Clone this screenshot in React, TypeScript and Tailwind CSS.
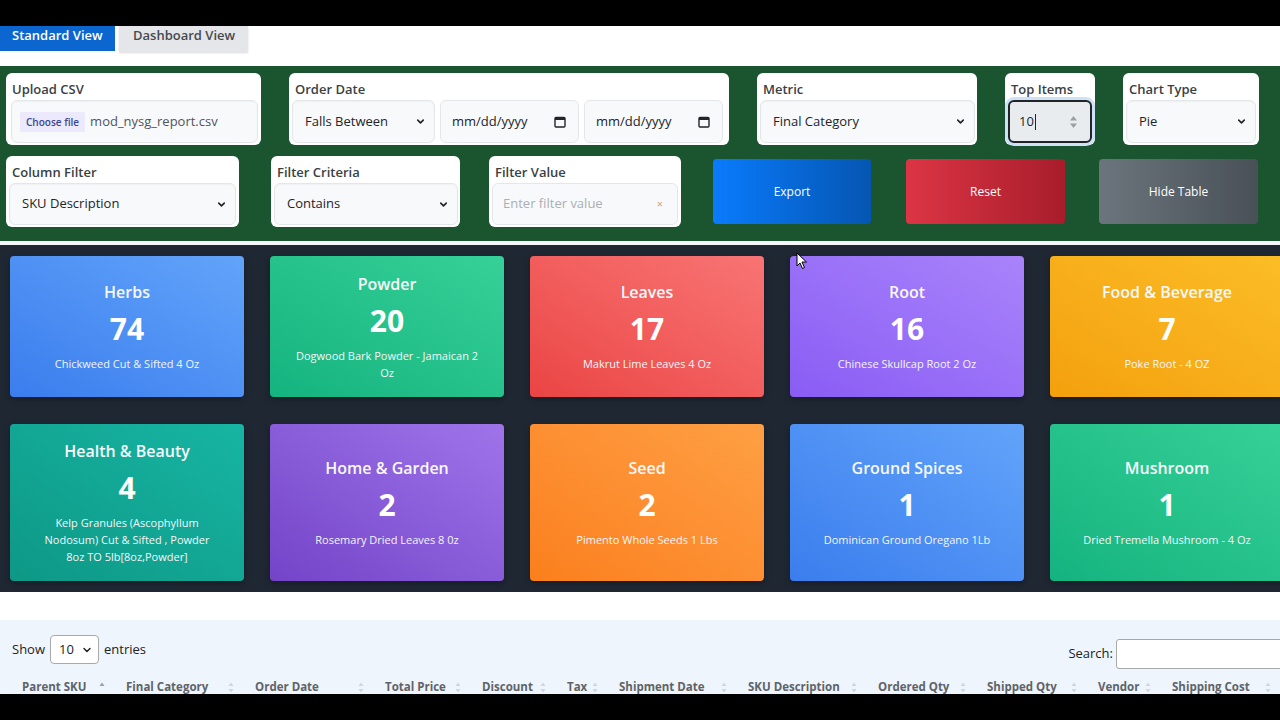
import { ChevronDown } from "lucide-react";

const cardsTop = [
    { title: "Herbs", value: "74", desc: "Chickweed Cut & Sifted 4 Oz", color: "from-[#3b7ded] to-[#62a4fa]" },
    { title: "Powder", value: "20", desc: "Dogwood Bark Powder - Jamaican 2 Oz", color: "from-[#13b37f] to-[#35d198]" },
    { title: "Leaves", value: "17", desc: "Makrut Lime Leaves 4 Oz", color: "from-[#ea4444] to-[#f87474]" },
    { title: "Root", value: "16", desc: "Chinese Skullcap Root 2 Oz", color: "from-[#8a5cf4] to-[#a983fb]" },
    { title: "Food & Beverage", value: "7", desc: "Poke Root - 4 OZ", color: "from-[#f4a00c] to-[#fbbd26]" },
];

const cardsBottom = [
    { title: "Health & Beauty", value: "4", desc: "Kelp Granules (Ascophyllum Nodosum) Cut & Sifted , Powder 8oz TO 5lb[8oz,Powder]", color: "from-[#0e9886] to-[#17b5a3]" },
    { title: "Home & Garden", value: "2", desc: "Rosemary Dried Leaves 8 0z", color: "from-[#7444c8] to-[#9f74ea]" },
    { title: "Seed", value: "2", desc: "Pimento Whole Seeds 1 Lbs", color: "from-[#fb7f1c] to-[#fe9f43]" },
    { title: "Ground Spices", value: "1", desc: "Dominican Ground Oregano 1Lb", color: "from-[#3b7ded] to-[#62a4fa]" },
    { title: "Mushroom", value: "1", desc: "Dried Tremella Mushroom - 4 Oz", color: "from-[#13b37f] to-[#35d198]" },
];

const columns = [
    { name: "Parent SKU", w: 104, active: true },
    { name: "Final Category", w: 129 },
    { name: "Order Date", w: 130 },
    { name: "Total Price", w: 97 },
    { name: "Discount", w: 85 },
    { name: "Tax", w: 52 },
    { name: "Shipment Date", w: 129 },
    { name: "SKU Description", w: 130 },
    { name: "Ordered Qty", w: 109 },
    { name: "Shipped Qty", w: 111 },
    { name: "Vendor", w: 74 },
    { name: "Shipping Cost", w: 120 },
];

export default function App() {
    return (
        <div className="relative w-[1280px] h-[720px] bg-black flex flex-col overflow-hidden" style={{ fontFamily: '"Open Sans", sans-serif' }}>
            <div className="h-[26px] shrink-0" />
            <div className="h-[668px] shrink-0 bg-white overflow-hidden flex flex-col">
                {/* view tabs */}
                <div className="flex items-start h-[26px] gap-[4px] shrink-0">
                    <div className="w-[115px] h-[25px] bg-[#0b66cf] text-white text-[13px] font-semibold pl-[12px] leading-[19px]">Standard View</div>
                    <div className="w-[129px] h-[26px] bg-[#e4e6e9] text-[#454a50] text-[13px] font-semibold pl-[14px] leading-[19px] shadow-[0_1px_2px_rgba(0,0,0,0.15)]">Dashboard View</div>
                </div>
                <div className="h-[14px] shrink-0" />

                {/* filter panel */}
                <div className="bg-[#1a5530] pt-[7px] pb-[14px] pl-[6px] flex flex-col gap-[11px] shrink-0">
                    <div className="flex gap-[28px]">
                        <FilterBox label="Upload CSV" className="w-[255px]">
                            <div className="h-[43px] ml-[2px] bg-[#f8f9fa] border border-[#e4e7ea] rounded-[6px] flex items-center pl-[8px] shadow-[inset_0_1px_2px_rgba(0,0,0,0.04)]">
                                <span className="bg-[#ebe9fb] text-[#3a4796] text-[10px] font-semibold px-[6px] h-[20px] leading-[20px] rounded-[2px]">Choose file</span>
                                <span className="ml-[5px] text-[13px] text-[#4f555b]">mod_nysg_report.csv</span>
                            </div>
                        </FilterBox>
                        <FilterBox label="Order Date" className="w-[440px]">
                            <div className="flex gap-[5px]">
                                <SelectBox value="Falls Between" className="w-[143px]" />
                                <DateBox />
                                <DateBox />
                            </div>
                        </FilterBox>
                        <FilterBox label="Metric" className="w-[220px]">
                            <SelectBox value="Final Category" className="w-[215px]" />
                        </FilterBox>
                        <FilterBox label="Top Items" className="w-[90px]">
                            <div className="h-[43px] bg-[#e9ecef] border-2 border-[#202428] rounded-[6px] flex items-center pl-[9px] pr-[12px] ring-[3px] ring-[#cfe1f6]">
                                <span className="text-[13px] text-[#212529]">10</span>
                                <span className="w-px h-[16px] bg-[#212529] ml-px" />
                                <svg className="ml-auto" width="9" height="16" viewBox="0 0 9 16">
                                    <path d="M4.5 2 L8 6.5 H1 Z" fill="#9aa0a6" />
                                    <path d="M4.5 14 L8 9.5 H1 Z" fill="#9aa0a6" />
                                </svg>
                            </div>
                        </FilterBox>
                        <FilterBox label="Chart Type" className="w-[136px]">
                            <SelectBox value="Pie" className="w-[130px]" />
                        </FilterBox>
                    </div>
                    <div className="flex items-center">
                        <FilterBox label="Column Filter" className="w-[233px]">
                            <SelectBox value="SKU Description" className="w-[227px]" short />
                        </FilterBox>
                        <FilterBox label="Filter Criteria" className="w-[189px] ml-[32px]">
                            <SelectBox value="Contains" className="w-[184px]" short />
                        </FilterBox>
                        <FilterBox label="Filter Value" className="w-[192px] ml-[29px]">
                            <div className="h-[42px] bg-[#f8f9fa] border border-[#e4e7ea] rounded-[6px] flex items-center pl-[10px] pr-[14px]">
                                <span className="text-[13px] text-[#a9afb5]">Enter filter value</span>
                                <span className="ml-auto text-[11px] text-[#d2a46e]">×</span>
                            </div>
                        </FilterBox>
                        <button className="ml-[32px] w-[158px] h-[65px] rounded-[4px] bg-linear-to-r from-[#0a7bfd] to-[#0556b2] text-white text-[12px]">Export</button>
                        <button className="ml-[35px] w-[159px] h-[65px] rounded-[4px] bg-linear-to-r from-[#dc3545] to-[#a81d2b] text-white text-[12px]">Reset</button>
                        <button className="ml-[34px] w-[159px] h-[65px] rounded-[4px] bg-linear-to-r from-[#6c757d] to-[#495057] text-white text-[12px]">Hide Table</button>
                    </div>
                </div>
                <div className="h-[4px] bg-[#f4f6f8] shrink-0" />

                {/* category cards */}
                <div className="bg-[#1f2733] pt-[11px] pb-[11px] pl-[10px] flex flex-col gap-[27px] shrink-0">
                    <div className="flex gap-[26px] h-[141px]">
                        {cardsTop.map((c) => (
                            <CategoryCard key={c.title} {...c} />
                        ))}
                    </div>
                    <div className="flex gap-[26px] h-[157px]">
                        {cardsBottom.map((c) => (
                            <CategoryCard key={c.title} {...c} />
                        ))}
                    </div>
                </div>
                <div className="h-[28px] bg-white shrink-0" />

                {/* table controls */}
                <div className="flex-1 bg-[#eef5fd] pt-[15px]">
                    <div className="flex items-start justify-between">
                        <div className="flex items-center pl-[12px] text-[13px] text-[#222]">
                            <span>Show</span>
                            <div className="ml-[5px] w-[49px] h-[29px] bg-white border border-[#a9a9a9] rounded-[4px] flex items-center pl-[8px] pr-[5px]">
                                <span>10</span>
                                <ChevronDown className="ml-auto" size={12} strokeWidth={3} />
                            </div>
                            <span className="ml-[5px]">entries</span>
                        </div>
                        <div className="flex items-center mt-[4px] text-[13px] text-[#222] -mr-[24px]">
                            <span>Search:</span>
                            <div className="ml-[3px] w-[188px] h-[30px] bg-white border border-[#a9a9a9] rounded-[3px]" />
                        </div>
                    </div>
                    <div className="flex pl-[12px] mt-[10px]">
                        {columns.map((col) => (
                            <div key={col.name} className="flex items-center justify-between pl-[10px] pr-[11px] text-[11.5px] leading-[16px] font-bold text-[#5f6368] shrink-0" style={{ width: col.w }}>
                                <span className="whitespace-nowrap">{col.name}</span>
                                <SortArrows active={col.active} />
                            </div>
                        ))}
                    </div>
                </div>
            </div>
            <div className="h-[26px] shrink-0 bg-black" />

            {/* mouse pointer */}
            <svg className="absolute left-[796px] top-[252px]" width="12" height="18" viewBox="0 0 12 18">
                <path d="M1 1 L1 14 L4 11 L6.5 16.5 L8.5 15.5 L6 10 L10.5 10 Z" fill="#fff" stroke="#000" strokeWidth="1" />
            </svg>
        </div>
    );
}

function FilterBox({ label, className, children }: { label: string; className: string; children: React.ReactNode }) {
    return (
        <div className={`bg-white rounded-[6px] pt-[6px] px-[3px] pb-[2px] shrink-0 ${className}`}>
            <p className="text-[13px] font-semibold text-[#3a3f44] leading-[20px] pl-[3px] mb-px">{label}</p>
            {children}
        </div>
    );
}

function SelectBox({ value, className, short }: { value: string; className: string; short?: boolean }) {
    return (
        <div className={`${short ? "h-[42px]" : "h-[43px]"} bg-[#f8f9fa] border border-[#e4e7ea] rounded-[6px] flex items-center pl-[12px] pr-[8px] shrink-0 shadow-[inset_0_1px_2px_rgba(0,0,0,0.04)] ${className}`}>
            <span className="text-[13px] text-[#212529]">{value}</span>
            <ChevronDown className="ml-auto text-[#212529]" size={11} strokeWidth={3.5} />
        </div>
    );
}

function DateBox() {
    return (
        <div className="w-[139px] h-[43px] bg-[#f8f9fa] border border-[#e4e7ea] rounded-[6px] flex items-center pl-[11px] pr-[12px] shrink-0">
            <span className="text-[13px] text-[#212529]">mm/dd/yyyy</span>
            <svg className="ml-auto" width="12" height="12" viewBox="0 0 12 12">
                <rect x="1" y="1.5" width="10" height="9.5" rx="1" fill="none" stroke="#212529" strokeWidth="1.4" />
                <rect x="1" y="1.5" width="10" height="2.5" fill="#212529" />
            </svg>
        </div>
    );
}

function CategoryCard({ title, value, desc, color }: { title: string; value: string; desc: string; color: string }) {
    return (
        <div className={`w-[234px] h-full shrink-0 rounded-[4px] bg-linear-to-tr ${color} flex flex-col items-center justify-center text-center px-[25px] text-white shadow-[0_2px_6px_rgba(0,0,0,0.3)]`}>
            <p className="text-[16px] font-semibold leading-[22px] text-[#f7f8fb] whitespace-nowrap">{title}</p>
            <p className="text-[30px] font-bold leading-[36px] mt-[8px]">{value}</p>
            <p className="text-[11px] leading-[17px] mt-[8px] text-[#f3f5f8]">{desc}</p>
        </div>
    );
}

function SortArrows({ active }: { active?: boolean }) {
    return (
        <svg className="shrink-0" width="6" height="11" viewBox="0 0 6 11">
            <path d="M3 0.5 L5.5 4 H0.5 Z" fill={active ? "#9aa0a6" : "#d2d6da"} />
            {!active && <path d="M3 10.5 L5.5 7 H0.5 Z" fill="#d2d6da" />}
        </svg>
    );
}
